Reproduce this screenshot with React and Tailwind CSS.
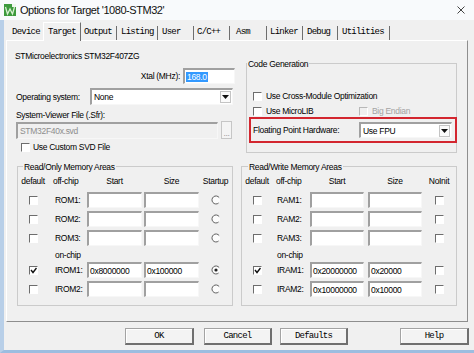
import React from "react";

const ui = "font-['Liberation_Sans',Arial,sans-serif] text-[8.5px] tracking-[-0.3px] leading-[12px] text-black";
const mono = "font-['Liberation_Mono','Courier_New',monospace] text-[9px] tracking-[-0.75px] leading-[12px] text-black";

function Check({ checked, disabled }) {
  return (
    <span
      className={
        "relative inline-block w-[9px] h-[9px] shrink-0 border-t border-l border-r border-b border-r-white border-b-white " +
        (disabled ? "border-t-[#b8b8b8] border-l-[#b8b8b8] bg-[#f0f0f0]" : "border-t-[#6d6d6d] border-l-[#6d6d6d] bg-white")
      }
    >
      {checked && (
        <svg width="7" height="7" viewBox="0 0 7 7" className="absolute left-0 top-0">
          <polyline points="1,3 3,5.5 6.5,1" fill="none" stroke="#111" strokeWidth="1.4" />
        </svg>
      )}
    </span>
  );
}

function Radio({ on }) {
  return (
    <svg width="10" height="10" viewBox="0 0 10 10">
      <circle cx="5" cy="5" r="4" fill="#fcfcfc" />
      <path d="M8.2 2.6 A4 4 0 1 0 7.6 8" fill="none" stroke="#5f5f5f" strokeWidth="1" />
      {on && <circle cx="5" cy="5" r="1.6" fill="#222" />}
    </svg>
  );
}

function Field({ className, children, disabled }) {
  return (
    <div
      className={
        "flex items-center h-[16px] pl-[1px] overflow-hidden whitespace-nowrap border-t-2 border-l-2 border-b border-r border-t-[#a0a0a0] border-l-[#a0a0a0] border-b-[#f7f7f7] border-r-[#f7f7f7] " +
        (disabled ? "bg-[#f0f0f0] text-[#8d8d8d] " : "bg-white ") +
        className
      }
    >
      {children}
    </div>
  );
}

function Select({ className, value }) {
  return (
    <Field className={className + " justify-between pr-[1px]"}>
      <span className="pl-[1px]">{value}</span>
      <span className="flex items-center justify-center w-[11px] h-[12px] border border-[#c4c4c4] bg-[#fbfbfb]">
        <svg width="7" height="4" viewBox="0 0 7 4">
          <polygon points="0,0 7,0 3.5,4" fill="#111" />
        </svg>
      </span>
    </Field>
  );
}

function Group({ label, className, labelPos, children }) {
  return (
    <div className={"relative border border-[#cbcbcb] " + className}>
      <span className={"absolute -top-[6px] px-[1px] bg-[#f0f0f0] " + labelPos}>{label}</span>
      {children}
    </div>
  );
}

function MemRow({ cb, label, start, size, last, right, className }) {
  return (
    <div className={"flex items-center h-[16px] " + className}>
      <div className="w-[30px] flex justify-center">
        <Check checked={cb} />
      </div>
      <div className={right ? "w-[38px] pl-[5px]" : "w-[39px] pl-[7px]"}>{label}</div>
      <Field className={right ? "w-[54px]" : "w-[55px]"}>{start}</Field>
      <Field className={right ? "w-[54px] ml-[4px]" : "w-[55px] ml-[2px]"}>{size}</Field>
      <div className="flex-1 flex justify-center">{last}</div>
    </div>
  );
}

function MemArea({ right }) {
  const rows = right
    ? [
        ["RAM1:", "", "", false],
        ["RAM2:", "", "", false],
        ["RAM3:", "", "", false],
      ]
    : [
        ["ROM1:", "", "", false],
        ["ROM2:", "", "", false],
        ["ROM3:", "", "", false],
      ];
  const chip = right
    ? [
        ["IRAM1:", "0x20000000", "0x20000", true],
        ["IRAM2:", "0x10000000", "0x10000", false],
      ]
    : [
        ["IROM1:", "0x8000000", "0x100000", true],
        ["IROM2:", "", "", false],
      ];
  const last = (on) => (right ? <Check /> : <Radio on={on} />);

  return (
    <Group
      label={right ? "Read/Write Memory Areas" : "Read/Only Memory Areas"}
      labelPos={right ? "left-[6px]" : "left-[5px]"}
      className={right ? "ml-[8px] w-[216px] h-[140px] pt-[8px]" : "ml-[1px] w-[216px] h-[140px] pt-[8px]"}
    >
      <div className="flex h-[12px]">
        <div className="w-[30px] text-center">default</div>
        <div className={right ? "w-[38px] pl-[4px]" : "w-[39px] pl-[5px]"}>off-chip</div>
        <div className={right ? "w-[54px] text-center" : "w-[55px] text-center"}>Start</div>
        <div className={right ? "w-[54px] ml-[4px] text-center" : "w-[55px] ml-[2px] text-center"}>Size</div>
        <div className="flex-1 text-center">{right ? "NoInit" : "Startup"}</div>
      </div>
      {rows.map((r, i) => (
        <MemRow
          key={r[0]}
          right={right}
          label={r[0]}
          start={r[1]}
          size={r[2]}
          cb={r[3]}
          last={last(false)}
          className={i === 0 ? "mt-[5px]" : "mt-[3px]"}
        />
      ))}
      <div className={right ? "mt-[3px] pl-[35px]" : "mt-[3px] pl-[37px]"}>on-chip</div>
      {chip.map((r, i) => (
        <MemRow
          key={r[0]}
          right={right}
          label={r[0]}
          start={r[1]}
          size={r[2]}
          cb={r[3]}
          last={last(r[3])}
          className={i === 0 ? "mt-[1px]" : "mt-[3px]"}
        />
      ))}
    </Group>
  );
}

function Tab({ label, className, selected }) {
  return (
    <div
      className={
        selected
          ? "relative z-10 -mb-[1px] h-[19px] pt-[3px] bg-[#f0f0f0] border-l border-t border-r border-l-white border-t-white border-r-[#6e6e6e] " + className
          : "h-[14px] " + className
      }
    >
      {label}
    </div>
  );
}

function Button({ label, className }) {
  return (
    <div
      className={
        "h-[17px] flex items-center justify-center bg-[#f3f3f3] border border-[#a3a3a3] border-r-2 border-b-2 border-r-[#6f6f6f] border-b-[#6f6f6f] shadow-[inset_1px_1px_0_#ffffff] " +
        className
      }
    >
      {label}
    </div>
  );
}

export default function App() {
  return (
    <div className={"w-[474px] h-[353px] bg-[#f0f0f0] flex flex-col overflow-hidden " + ui}>
      <div className="h-[20px] shrink-0 flex items-center bg-[#f8fafc] pl-[4px] pr-[9px]">
        <svg width="12" height="12" viewBox="0 0 12 12">
          <rect width="12" height="12" fill="#3d9a3d" />
          <rect x="8" y="0" width="4" height="3" fill="#eef6ee" />
          <polyline points="1.5,3 3.5,10 6,5 8.5,10 10.5,3" fill="none" stroke="#d7efd2" strokeWidth="1.3" />
        </svg>
        <span className="ml-[4px] text-[11px] tracking-[-0.45px] text-[#111]">Options for Target '1080-STM32'</span>
        <svg width="8" height="8" viewBox="0 0 8 8" className="ml-auto">
          <path d="M0.5 0.5 L7.5 7.5 M7.5 0.5 L0.5 7.5" stroke="#444" strokeWidth="1" />
        </svg>
      </div>

      <div className="flex-1 flex flex-col border-l-4 border-l-[#b8cfe8] border-b-[3px] border-b-[#9cbde0]">
        <div className={"h-[20px] shrink-0 flex items-end pl-[2px] " + mono}>
          <Tab label="Device" className="w-[37px] pl-[6px]" />
          <Tab label="Target" className="w-[38px] pl-[4px]" selected />
          <Tab label="Output" className="w-[36px] pl-[3px] border-r border-r-[#6e6e6e]" />
          <Tab label="Listing" className="w-[41px] pl-[4px] border-r border-r-[#6e6e6e]" />
          <Tab label="User" className="w-[36px] pl-[4px] border-r border-r-[#6e6e6e]" />
          <Tab label="C/C++" className="w-[36px] pl-[3px] border-r border-r-[#6e6e6e]" />
          <Tab label="Asm" className="w-[37px] pl-[6px] border-r border-r-[#6e6e6e]" />
          <Tab label="Linker" className="w-[36px] pl-[3px] border-r border-r-[#6e6e6e]" />
          <Tab label="Debug" className="w-[35px] pl-[4px] border-r border-r-[#6e6e6e]" />
          <Tab label="Utilities" className="w-[52px] pl-[4px] border-r border-r-[#6e6e6e]" />
        </div>

        <div className="ml-[2px] w-[462px] h-[282px] shrink-0 pl-[9px] pt-[9px] border-l border-t border-r border-b border-l-white border-t-white border-r-[#8e8e8e] border-b-[#8e8e8e]">
          <div className="flex">
            <div className="w-[220px]">
              <div className="-ml-[1px] h-[12px]">STMicroelectronics STM32F407ZG</div>
              <div className="mt-[6px] h-[16px] flex items-center justify-end pr-[1px]">
                <span>Xtal (MHz):</span>
                <Field className="ml-[3px] w-[52px]">
                  <span className="bg-[#3399ff] text-white px-[1px] leading-[10px]">168.0</span>
                </Field>
              </div>
              <div className="mt-[4px] h-[17px] flex items-center">
                <span className="w-[74px]">Operating system:</span>
                <Select className="w-[143px] h-[17px]" value="None" />
              </div>
              <div className="mt-[4px] h-[12px]">System-Viewer File (.Sfr):</div>
              <div className="h-[18px] flex items-center">
                <Field disabled className="w-[202px] h-[17px]">
                  <span className="pl-[1px]">STM32F40x.svd</span>
                </Field>
                <div className="ml-[3px] w-[11px] h-[18px] flex items-end justify-center pb-[2px] border border-[#c6c6c6] bg-[#f4f4f4] text-[#9a9a9a] leading-[6px]">
                  ...
                </div>
              </div>
              <div className="mt-[3px] h-[10px] flex items-center pl-[5px]">
                <Check />
                <span className="ml-[3px]">Use Custom SVD File</span>
              </div>
            </div>

            <Group
              label="Code Generation"
              labelPos="left-0"
              className="ml-[10px] mt-[13px] w-[211px] h-[90px] pt-[26px] pl-[6px]"
            >
              <div className="h-[12px] flex items-center">
                <Check />
                <span className="ml-[4px]">Use Cross-Module Optimization</span>
              </div>
              <div className="mt-[3px] h-[12px] flex items-center">
                <div className="w-[106px] flex items-center">
                  <Check />
                  <span className="ml-[4px]">Use MicroLIB</span>
                </div>
                <Check disabled />
                <span className="ml-[4px] text-[#a3a3a3]">Big Endian</span>
              </div>
              <div className="-ml-[4px] -mr-[1px] h-[26px] flex items-center pl-[2px] border-2 border-[#d3262f]">
                <span className="w-[106px]">Floating Point Hardware:</span>
                <Select className="w-[93px] h-[16px]" value="Use FPU" />
              </div>
            </Group>
          </div>

          <div className="mt-[13px] flex">
            <MemArea />
            <MemArea right />
          </div>
        </div>

        <div className={"mt-[6px] flex " + mono}>
          <Button label="OK" className="ml-[121px] w-[69px]" />
          <Button label="Cancel" className="ml-[10px] w-[68px]" />
          <Button label="Defaults" className="ml-[8px] w-[68px]" />
          <Button label="Help" className="ml-[52px] w-[69px]" />
        </div>
      </div>
    </div>
  );
}
